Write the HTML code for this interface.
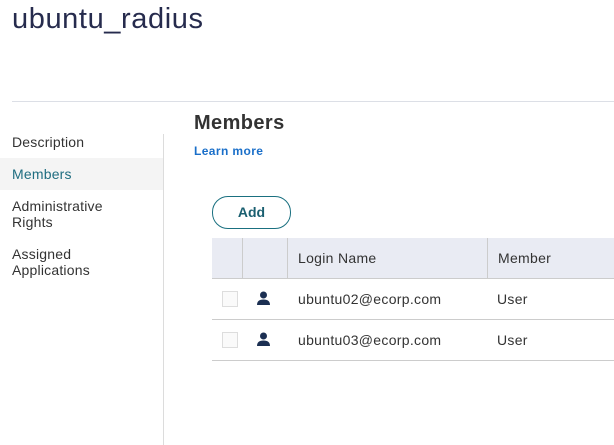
<!DOCTYPE html>
<html><head><style>
body{margin:0;width:614px;height:445px;background:#fff;font-family:"Liberation Sans",sans-serif;position:relative;overflow:hidden;color:#333}
.a{position:absolute}
.t{left:12px;top:3px;font-size:29px;color:#262b4d;letter-spacing:0.6px}
.nav{font-size:14px;color:#333;left:12px;line-height:16px;letter-spacing:0.2px}
.cell{position:absolute;font-size:14px;color:#333;letter-spacing:0.3px}
</style></head><body>
<div class="a t">ubuntu_radius</div>
<div class="a" style="left:12px;top:101px;width:602px;height:1px;background:#dcdfe6"></div>
<div class="a" style="left:163px;top:134px;width:1px;height:311px;background:#dcdcdc"></div>
<div class="a nav" style="top:134px">Description</div>
<div class="a" style="left:0;top:158px;width:163px;height:32px;background:#f4f4f4"></div>
<div class="a nav" style="top:166px;color:#1f6d80">Members</div>
<div class="a nav" style="top:198px">Administrative<br>Rights</div>
<div class="a nav" style="top:246px">Assigned<br>Applications</div>
<div class="a" style="left:194px;top:112px;font-size:20px;font-weight:bold;color:#333;letter-spacing:0.4px">Members</div>
<div class="a" style="left:194px;top:144px;font-size:12px;font-weight:bold;color:#1a6fc9;letter-spacing:0.4px">Learn more</div>
<div class="a" style="left:212px;top:196px;width:77px;height:31px;border:1px solid #1a7080;border-radius:16px;text-align:center;line-height:31px;font-size:14px;font-weight:bold;color:#1a5f70">Add</div>
<div class="a" style="left:212px;top:238px;width:402px;height:40px;background:#e9ebf3;border-bottom:1px solid #ccc"></div>
<div class="a" style="left:242px;top:238px;width:1px;height:40px;background:#ccc"></div>
<div class="a" style="left:287px;top:238px;width:1px;height:40px;background:#ccc"></div>
<div class="a" style="left:487px;top:238px;width:1px;height:40px;background:#ccc"></div>
<div class="cell" style="left:298px;top:250px">Login Name</div>
<div class="cell" style="left:498px;top:250px">Member</div>
<div class="a" style="left:212px;top:319px;width:402px;height:1px;background:#ccc"></div>
<div class="a" style="left:212px;top:360px;width:402px;height:1px;background:#ccc"></div>
<div class="a" style="left:222px;top:291px;width:14px;height:14px;border:1px solid #ddd;background:#fafafa"></div>
<div class="a" style="left:222px;top:332px;width:14px;height:14px;border:1px solid #ddd;background:#fafafa"></div>
<svg class="a" style="left:256px;top:291px" width="15" height="14" viewBox="0 0 15 14"><circle cx="7.5" cy="4" r="3.5" fill="#1b2f52"/><path d="M1 14 Q1 8.5 7.5 8.5 Q14 8.5 14 14Z" fill="#1b2f52"/></svg>
<svg class="a" style="left:256px;top:332px" width="15" height="14" viewBox="0 0 15 14"><circle cx="7.5" cy="4" r="3.5" fill="#1b2f52"/><path d="M1 14 Q1 8.5 7.5 8.5 Q14 8.5 14 14Z" fill="#1b2f52"/></svg>
<div class="cell" style="left:298px;top:291px">ubuntu02@ecorp.com</div>
<div class="cell" style="left:497px;top:291px">User</div>
<div class="cell" style="left:298px;top:332px">ubuntu03@ecorp.com</div>
<div class="cell" style="left:497px;top:332px">User</div>
</body></html>
